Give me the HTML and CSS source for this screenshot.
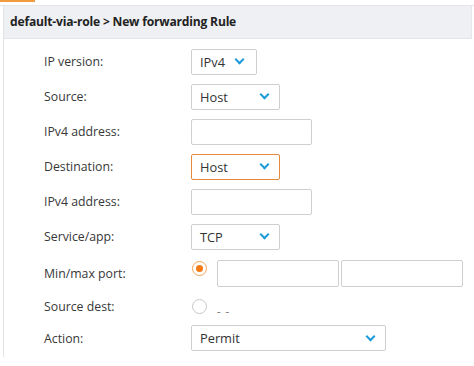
FILE: index.html
```html
<!DOCTYPE html>
<html lang="en">
<head>
  <meta charset="UTF-8"/>
  <title>New forwarding Rule</title>
  <link rel="stylesheet" href="styles.css">
</head>
<body>
  <div class="top-strip"><div class="accent"></div></div>
  <div class="panel">
    <div class="panel-head">default-via-role &gt; New forwarding Rule</div>
    <form class="rule-form" autocomplete="off">
      <div class="row">
        <label class="lbl">IP version:</label>
        <div class="select w-ipver"><span>IPv4</span><i class="chev"></i></div>
      </div>
      <div class="row">
        <label class="lbl">Source:</label>
        <div class="select w-host"><span>Host</span><i class="chev"></i></div>
      </div>
      <div class="row">
        <label class="lbl">IPv4 address:</label>
        <input type="text" class="txt w-addr"/>
      </div>
      <div class="row">
        <label class="lbl">Destination:</label>
        <div class="select w-host focused"><span>Host</span><i class="chev"></i></div>
      </div>
      <div class="row">
        <label class="lbl">IPv4 address:</label>
        <input type="text" class="txt w-addr"/>
      </div>
      <div class="row">
        <label class="lbl">Service/app:</label>
        <div class="select w-host"><span>TCP</span><i class="chev"></i></div>
      </div>
      <div class="row row-port">
        <label class="lbl">Min/max port:</label>
        <span class="radio on"></span>
        <input type="text" class="txt w-port"/>
        <input type="text" class="txt w-port"/>
      </div>
      <div class="row row-dest">
        <label class="lbl">Source dest:</label>
        <span class="radio"></span>
        <span class="dashes">- -</span>
      </div>
      <div class="row row-action">
        <label class="lbl">Action:</label>
        <div class="select w-action"><span>Permit</span><i class="chev"></i></div>
      </div>
    </form>
  </div>
</body>
</html>
```

FILE: styles.css
```css
body { margin: 0; font-family: 'Open Sans', Arial, sans-serif; font-size: 12.3px; color: #383838; background: #fff; }
.top-strip { height: 5px; border-bottom: 1px solid #e6e6e6; }
.accent { width: 35px; height: 2px; background: #f29b3c; }
.panel { margin-left: 3px; width: 468px; border-left: 1px solid #e4e4e4; padding-bottom: 2px; }
.panel-head {
  height: 32px; line-height: 32px; padding-left: 6px; background: #eef0f3; border-right: 1px solid #e6e6e6;
  border-bottom: 1px solid #e3e5e8; font-weight: 700; color: #222; font-size: 12.1px; letter-spacing: -0.2px;
}
.rule-form { padding: 5px 0 0 40px; }
.row { display: flex; align-items: center; height: 35px; }
.lbl { width: 147px; flex: none; }
.select, .txt {
  box-sizing: border-box; height: 26px; border: 1px solid #cfcfcf; border-radius: 2px; background: #fff;
  font: inherit; font-size: 12.8px; color: #333;
}
.select { display: flex; align-items: center; justify-content: space-between; padding: 0 11px 0 8px; }
.select.focused { border-color: #e8893a; }
.chev {
  width: 5px; height: 5px; border-right: 2px solid #1b9bd7; border-bottom: 2px solid #1b9bd7;
  transform: rotate(45deg); margin-top: -4px;
}
.w-ipver { width: 66px; padding-right: 13px; }
.w-host { width: 89px; }
.w-addr { width: 121px; }
.w-action { width: 195px; }
.txt { padding: 0 6px; }
.row-port { align-items: flex-start; height: 37px; padding-top: 6px; box-sizing: border-box; }
.row-port .lbl { margin-top: 5px; }
.row-port .radio { margin-top: 1px; }
.w-port { width: 122px; height: 27px; margin-left: 10px; }
.w-port + .w-port { margin-left: 2px; }
.radio {
  box-sizing: border-box; width: 15px; height: 15px; border: 1px solid #c8c8c8; border-radius: 50%; margin-left: 1px;
  display: flex; align-items: center; justify-content: center; background: #fff;
}
.radio.on { border-color: #f5a55a; }
.radio.on::after { content: ""; width: 7px; height: 7px; border-radius: 50%; background: #f47a14; }
.row-dest { height: 30px; }
.dashes { margin-left: 10px; margin-top: 9px; font-size: 11px; color: #666; letter-spacing: 1px; }
.row-action { height: 34px; }
```
